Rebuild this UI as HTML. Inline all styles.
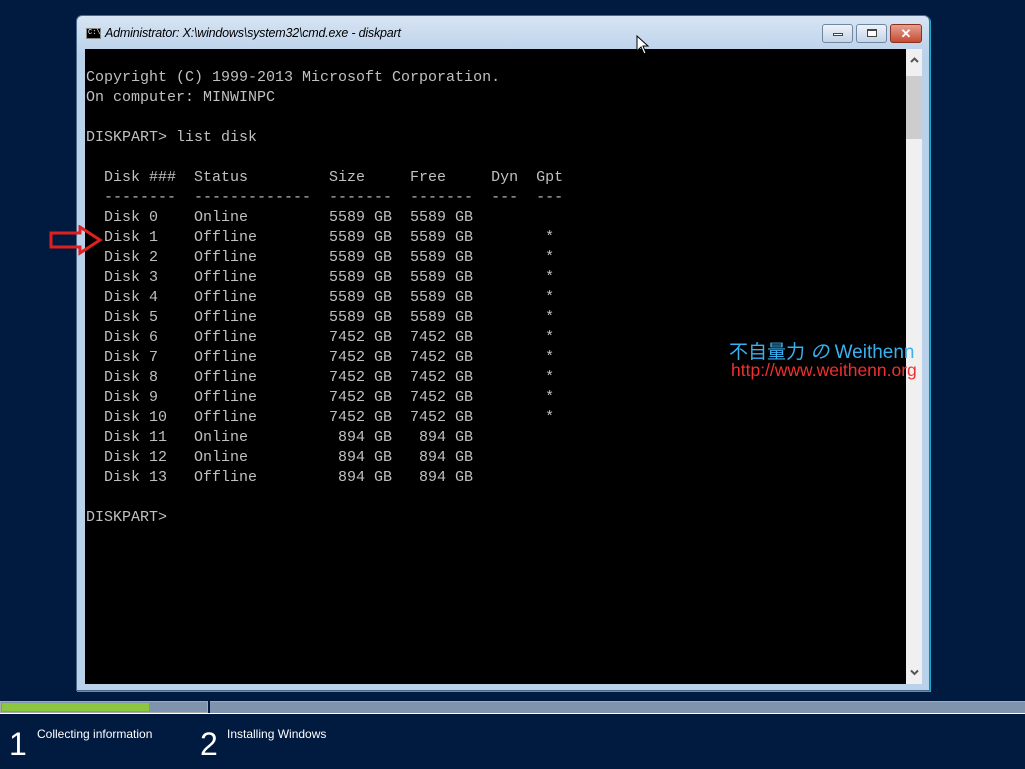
<!DOCTYPE html>
<html><head><meta charset="utf-8"><style>
*{margin:0;padding:0;box-sizing:border-box}
body{width:1025px;height:769px;background:#001a40;position:relative;overflow:hidden;font-family:"Liberation Sans",sans-serif}
.win{position:absolute;left:76px;top:15px;width:854px;height:676px;background:linear-gradient(#d7e4f3,#b9d1ea 40px);border:1px solid #4a6a8a;border-radius:6px 6px 0 0;box-shadow:1px 1px 0 #2ac}
.title{position:absolute;left:28px;top:10px;font-size:12.5px;font-style:italic;color:#000;letter-spacing:-0.2px}
.ico{position:absolute;left:9px;top:12px;width:15px;height:11px;background:#000;border:1px solid #888;color:#fff;font-size:7px;line-height:9px;font-family:"Liberation Mono",monospace;padding-left:1px}
.btn{position:absolute;top:8px;height:19px;border:1px solid #6f87a3;border-radius:3px;background:linear-gradient(#eef3f9,#c3d4e7)}
.con{position:absolute;left:8px;top:33px;width:821px;height:635px;background:#000}
.sb{position:absolute;left:829px;top:33px;width:16px;height:635px;background:#f0f0f0}
pre{position:absolute;left:1px;top:19px;font-family:"Liberation Mono",monospace;font-size:15px;line-height:20px;color:#c0c0c0}
</style></head><body>
<div class="win">
 <div class="ico">C:\_</div>
 <div class="title">Administrator: X:\windows\system32\cmd.exe - diskpart</div>
 <div class="btn" style="left:745px;width:31px"><div style="position:absolute;left:10px;top:8px;width:10px;height:3px;border:1px solid #444;background:#fff"></div></div>
 <div class="btn" style="left:779px;width:31px"><div style="position:absolute;left:10px;top:4px;width:10px;height:8px;border:1px solid #444;border-top-width:2px;background:#fff"></div></div>
 <div class="btn" style="left:813px;width:32px;background:linear-gradient(#e8a08e,#c44c34);border-color:#8a3020;color:#fff;font-weight:bold;font-size:13px;text-align:center;line-height:17px">✕</div>
 <div class="con"><pre>Copyright (C) 1999-2013 Microsoft Corporation.
On computer: MINWINPC

DISKPART&gt; list disk

  Disk ###  Status         Size     Free     Dyn  Gpt
  --------  -------------  -------  -------  ---  ---
  Disk 0    Online         5589 GB  5589 GB
  Disk 1    Offline        5589 GB  5589 GB        *
  Disk 2    Offline        5589 GB  5589 GB        *
  Disk 3    Offline        5589 GB  5589 GB        *
  Disk 4    Offline        5589 GB  5589 GB        *
  Disk 5    Offline        5589 GB  5589 GB        *
  Disk 6    Offline        7452 GB  7452 GB        *
  Disk 7    Offline        7452 GB  7452 GB        *
  Disk 8    Offline        7452 GB  7452 GB        *
  Disk 9    Offline        7452 GB  7452 GB        *
  Disk 10   Offline        7452 GB  7452 GB        *
  Disk 11   Online          894 GB   894 GB
  Disk 12   Online          894 GB   894 GB
  Disk 13   Offline         894 GB   894 GB

DISKPART&gt;</pre>
 </div>
 <div class="sb">
  <div style="position:absolute;left:0;top:27px;width:16px;height:63px;background:#cdcdcd"></div>
  <svg style="position:absolute;left:4px;top:8px" width="9" height="7"><polyline points="1,5 4.5,1.5 8,5" fill="none" stroke="#555" stroke-width="2"/></svg>
  <svg style="position:absolute;left:4px;top:620px" width="9" height="7"><polyline points="1,1.5 4.5,5 8,1.5" fill="none" stroke="#555" stroke-width="2"/></svg>
 </div>
</div>
<div style="position:absolute;left:729px;top:337px;font-family:'Liberation Sans','Noto Sans CJK SC',sans-serif;font-size:19px;color:#3ab0f0;white-space:nowrap;z-index:5">不自量力 <i>の</i> Weithenn</div>
<div style="position:absolute;left:731px;top:360px;font-size:17.5px;color:#f03030;white-space:nowrap;z-index:5">http://www.weithenn.org</div>
<svg style="position:absolute;left:48px;top:225px" width="56" height="32"><polygon points="3,8 32,8 32,2 52,15 32,28 32,22 3,22" fill="none" stroke="#e02020" stroke-width="3"/></svg>
<svg style="position:absolute;left:636px;top:35px" width="14" height="22"><polygon points="1,1 1,16 5,12 8,19 10,18 7,11 12,11" fill="#fff" stroke="#000"/></svg>
<div style="position:absolute;left:0;top:701px;width:208px;height:12px;background:#7f93ad;border:1px solid #aaa"></div>
<div style="position:absolute;left:2px;top:703px;width:147px;height:8px;background:#8dc63f"></div>
<div style="position:absolute;left:210px;top:701px;width:815px;height:12px;background:#7f93ad;border-top:1px solid #aaa"></div>
<div style="position:absolute;left:0;top:713px;width:1025px;height:1px;background:#fff"></div>
<div style="position:absolute;left:9px;top:726px;font-size:32px;color:#fff;font-weight:300">1</div>
<div style="position:absolute;left:37px;top:727px;font-size:12px;color:#fff">Collecting information</div>
<div style="position:absolute;left:200px;top:726px;font-size:32px;color:#fff">2</div>
<div style="position:absolute;left:227px;top:727px;font-size:12px;color:#fff">Installing Windows</div>
</body></html>
